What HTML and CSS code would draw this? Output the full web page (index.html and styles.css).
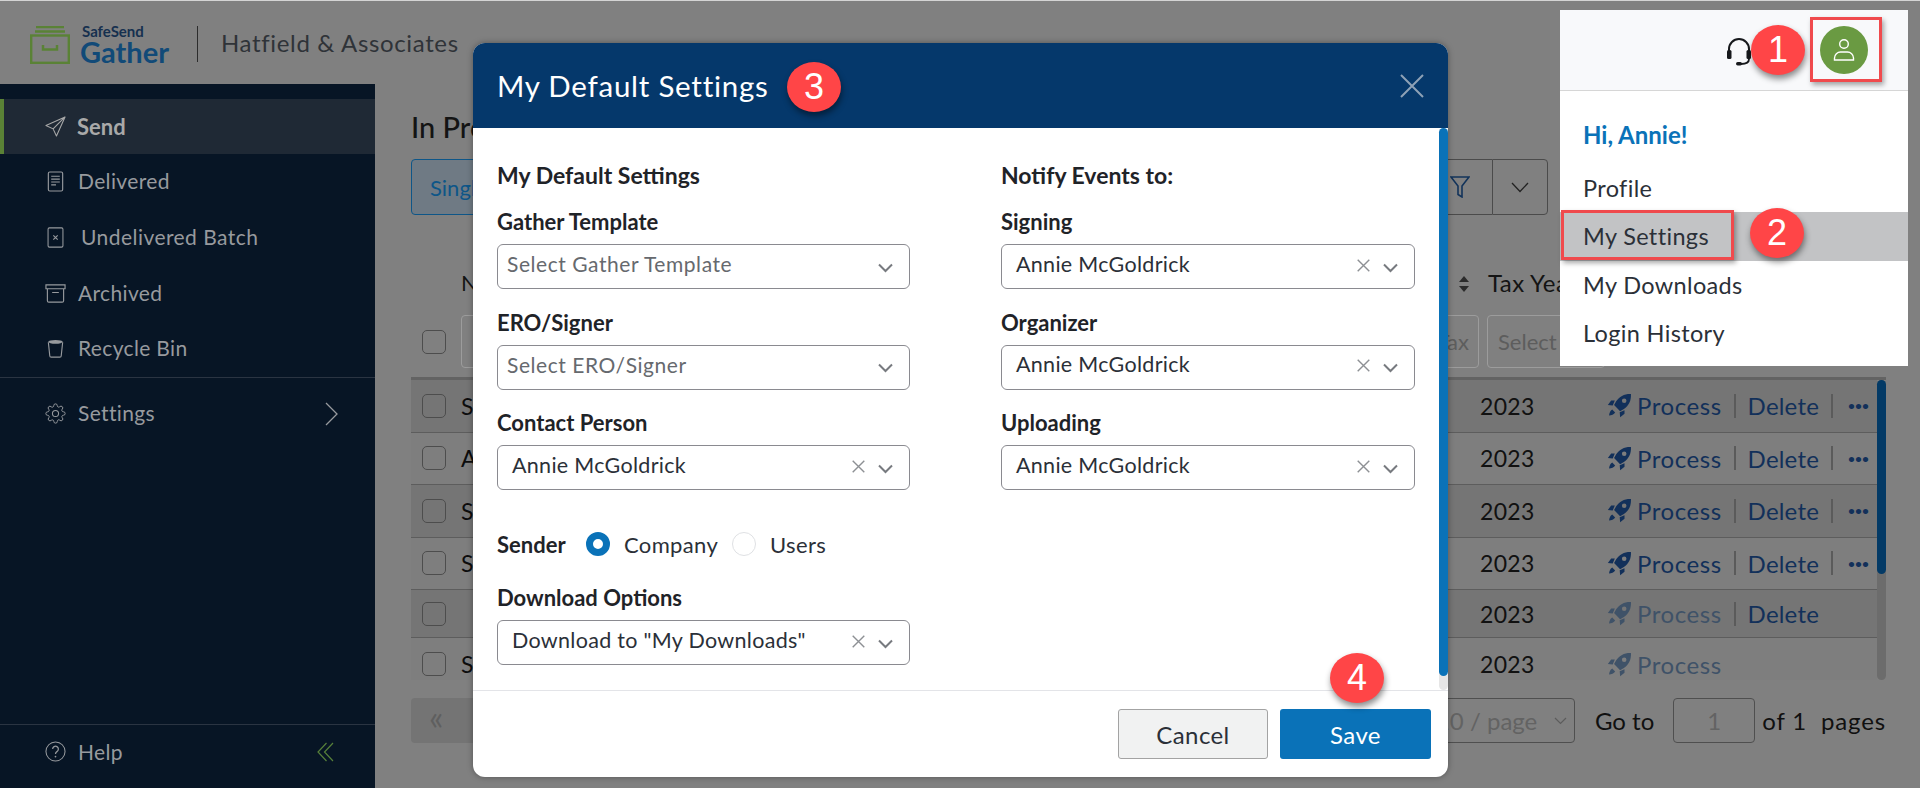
FILE: index.html
```html
<!DOCTYPE html>
<html lang="en">
<head>
<meta charset="utf-8">
<title>My Default Settings</title>
<link rel="stylesheet" href="styles.css">
</head>
<body>
<svg class="sprite" aria-hidden="true">
  <symbol id="rocket" viewBox="0 0 24 24">
    <path fill-rule="evenodd" d="M23 1c-6.500-.2-11 2.300-14.200 7L6.800 11.600l5.800 5.800 3.600-2c4.700-3.200 7.100-7.800 6.800-14.400zM16.500 5.300a2.200 2.200 0 1 1 0 4.400 2.200 2.200 0 0 1 0-4.400z"/>
    <path d="M7.500 7.300H4L.8 11.500l4.700.4zM16.800 16.500V20l-4.200 3.200-.4-4.700zM5 15.800c-1.800 1-2.800 3.700-3 5.800 2.100-.2 4.800-1.200 5.800-3z"/>
  </symbol>
  <symbol id="chev" viewBox="0 0 15 10">
    <path d="M1 1.500l6.500 6.500L14 1.500" fill="none" stroke="currentColor" stroke-width="2"/>
  </symbol>
  <symbol id="cross" viewBox="0 0 13 13">
    <path d="M.7.7l11.600 11.600M12.300.7L.7 12.300" fill="none" stroke="currentColor" stroke-width="1.400"/>
  </symbol>
</svg>

<div class="app">
  <header class="topbar">
    <svg class="logo-mark" viewBox="0 0 40 38">
      <path d="M6 1h28M5 5.500h30" stroke="#5a8236" stroke-width="2.500" fill="none"/>
      <rect x="1.200" y="9.500" width="37.600" height="27.300" fill="none" stroke="#5a8236" stroke-width="2.400"/>
      <path d="M13 19v4.500h14V19" fill="none" stroke="#5a8236" stroke-width="2.500"/>
    </svg>
    <div class="logo-text"><span class="logo-safe">SafeSend</span><span class="logo-gather">Gather</span></div>
    <div class="topbar-rule"></div>
    <div class="firm">Hatfield &amp; Associates</div>
  </header>

  <div class="shell">
    <aside class="sidebar">
      <nav class="nav">
        <a class="nav-item active">
          <svg class="nav-icon" viewBox="0 0 22 22"><path d="M21 1L1 10l7.500 3.500L12 21zM21 1L8.500 13.500" fill="none" stroke="currentColor" stroke-width="1.100" stroke-linejoin="round"/></svg>
          <span class="nav-send">Send</span>
        </a>
        <a class="nav-item">
          <svg class="nav-icon" viewBox="0 0 22 22"><rect x="3.500" y="1" width="15" height="20" rx="1.500" fill="none" stroke="currentColor" stroke-width="1.200"/><path d="M6.500 5.500h9M6.500 8.500h9M6.500 11.500h9M6.500 14.500h5" stroke="currentColor" stroke-width="1.200"/></svg>
          <span class="nav-label">Delivered</span>
        </a>
        <a class="nav-item">
          <svg class="nav-icon" viewBox="0 0 22 24"><rect x="2.500" y="1" width="17" height="22" rx="1.500" fill="none" stroke="currentColor" stroke-width="1.200"/><path d="M8.500 9.500l5 5M13.500 9.500l-5 5" stroke="currentColor" stroke-width="1.300"/></svg>
          <span class="nav-label nav-undelivered">Undelivered Batch</span>
        </a>
        <a class="nav-item">
          <svg class="nav-icon" viewBox="0 0 22 20"><path d="M1 1h20v4H1zM2.500 5v12.500a1.500 1.500 0 0 0 1.500 1.500h14a1.500 1.500 0 0 0 1.500-1.500V5M7.500 9h7" fill="none" stroke="currentColor" stroke-width="1.200"/></svg>
          <span class="nav-label">Archived</span>
        </a>
        <a class="nav-item">
          <svg class="nav-icon" viewBox="0 0 22 20"><path d="M3.500 3.500l1.500 14a1.500 1.500 0 0 0 1.500 1.500h9a1.500 1.500 0 0 0 1.500-1.500l1.500-14" fill="none" stroke="currentColor" stroke-width="1.200"/><ellipse cx="11" cy="3" rx="7.500" ry="2" fill="currentColor"/></svg>
          <span class="nav-label">Recycle Bin</span>
        </a>
      </nav>
      <a class="nav-item settings">
        <svg class="nav-icon" viewBox="0 0 24 24"><circle cx="12" cy="12" r="3.500" fill="none" stroke="currentColor" stroke-width="1.200"/><path fill="none" stroke="currentColor" stroke-width="1.100" d="M19.400 15a1.650 1.650 0 0 0 .33 1.820l.06.06a2 2 0 0 1 0 2.830 2 2 0 0 1-2.830 0l-.06-.06a1.650 1.650 0 0 0-1.820-.33 1.650 1.650 0 0 0-1 1.510V21a2 2 0 0 1-2 2 2 2 0 0 1-2-2v-.09A1.650 1.650 0 0 0 9 19.400a1.650 1.650 0 0 0-1.820.33l-.06.06a2 2 0 0 1-2.830 0 2 2 0 0 1 0-2.830l.06-.06a1.650 1.650 0 0 0 .33-1.820 1.650 1.650 0 0 0-1.510-1H3a2 2 0 0 1-2-2 2 2 0 0 1 2-2h.09A1.650 1.650 0 0 0 4.600 9a1.650 1.650 0 0 0-.33-1.820l-.06-.06a2 2 0 0 1 0-2.830 2 2 0 0 1 2.830 0l.06.06a1.650 1.650 0 0 0 1.820.33H9a1.650 1.650 0 0 0 1-1.510V3a2 2 0 0 1 2-2 2 2 0 0 1 2 2v.09a1.650 1.650 0 0 0 1 1.510 1.650 1.650 0 0 0 1.820-.33l.06-.06a2 2 0 0 1 2.830 0 2 2 0 0 1 0 2.830l-.06.06a1.650 1.650 0 0 0-.33 1.820V9a1.650 1.650 0 0 0 1.510 1H21a2 2 0 0 1 2 2 2 2 0 0 1-2 2h-.09a1.650 1.650 0 0 0-1.510 1z"/></svg>
        <span class="nav-label">Settings</span>
        <svg class="nav-arrow" viewBox="0 0 13 24"><path d="M1 1l11 11L1 23" fill="none" stroke="currentColor" stroke-width="1.300"/></svg>
      </a>
      <div class="side-foot">
        <svg class="nav-icon" viewBox="0 0 22 22"><circle cx="11" cy="11" r="10" fill="none" stroke="currentColor" stroke-width="1.100"/><path d="M8 8.500a3 3 0 1 1 4.500 2.600c-1 .6-1.500 1.200-1.500 2.400" fill="none" stroke="currentColor" stroke-width="1.300"/><circle cx="11" cy="16.300" r=".9" fill="currentColor"/></svg>
        <span class="nav-label">Help</span>
        <svg class="foot-arrow" viewBox="0 0 17 20"><path d="M9.500 1L1 10l8.500 9M16 1l-8.500 9 8.500 9" fill="none" stroke="#57803a" stroke-width="1.200"/></svg>
      </div>
    </aside>

    <main class="main">
      <h1 class="page-title">In Progress</h1>
      <div class="toolbar">
        <button class="tab-btn">Single Organizer</button>
        <div class="tools">
          <div class="tool"><svg class="tool-filter" viewBox="0 0 20 22"><path d="M1 1h18l-7 9v11l-4-2.500V10z" fill="none" stroke="#12335a" stroke-width="1.600"/></svg></div>
          <div class="tool tool-wide"><svg class="tool-chev" viewBox="0 0 18 11"><path d="M1 1l8 8.500L17 1" fill="none" stroke="#222" stroke-width="1.300"/></svg></div>
        </div>
      </div>
      <div class="head-row">
        <span class="head-name">Name</span>
        <span class="sort"></span>
        <span class="head-year">Tax Year</span>
      </div>
      <div class="filter-row">
        <span class="check"></span>
        <span class="filter-input">Tax</span>
        <span class="filter-select">Select</span>
      </div>
      <div class="grid">
        <div class="rows">
          <div class="row">
            <span class="check"></span><span class="cell-name">Smith</span><span class="cell-year">2023</span>
            <span class="actions"><svg class="rocket"><use href="#rocket"/></svg><span>Process</span><i class="sep"></i><span class="del">Delete</span><i class="sep"></i><b class="dots">•••</b></span>
          </div>
          <div class="row even">
            <span class="check"></span><span class="cell-name">Adams</span><span class="cell-year">2023</span>
            <span class="actions"><svg class="rocket"><use href="#rocket"/></svg><span>Process</span><i class="sep"></i><span class="del">Delete</span><i class="sep"></i><b class="dots">•••</b></span>
          </div>
          <div class="row">
            <span class="check"></span><span class="cell-name">Smith</span><span class="cell-year">2023</span>
            <span class="actions"><svg class="rocket"><use href="#rocket"/></svg><span>Process</span><i class="sep"></i><span class="del">Delete</span><i class="sep"></i><b class="dots">•••</b></span>
          </div>
          <div class="row even">
            <span class="check"></span><span class="cell-name">Smith</span><span class="cell-year">2023</span>
            <span class="actions"><svg class="rocket"><use href="#rocket"/></svg><span>Process</span><i class="sep"></i><span class="del">Delete</span><i class="sep"></i><b class="dots">•••</b></span>
          </div>
          <div class="row short">
            <span class="check"></span><span class="cell-name"></span><span class="cell-year">2023</span>
            <span class="actions"><svg class="rocket off"><use href="#rocket"/></svg><span class="off">Process</span><i class="sep"></i><span class="del">Delete</span></span>
          </div>
          <div class="row even last">
            <span class="check"></span><span class="cell-name">Smith</span><span class="cell-year">2023</span>
            <span class="actions"><svg class="rocket off"><use href="#rocket"/></svg><span class="off">Process</span></span>
          </div>
        </div>
        <div class="table-scroll"><div class="table-thumb"></div></div>
      </div>
      <div class="pager">
        <div class="page-first">«</div>
        <div class="page-size">10 / page<svg class="size-chev" viewBox="0 0 13 8"><path d="M1 1l5.500 5.500L12 1" fill="none" stroke="#5c5c5c" stroke-width="1.200"/></svg></div>
        <span class="page-go">Go to</span>
        <div class="page-input">1</div>
        <span class="page-of">of 1  pages</span>
      </div>
    </main>
  </div>
</div>

<section class="modal">
  <div class="modal-head">
    <h2 class="modal-title">My Default Settings</h2>
    <svg class="modal-close" viewBox="0 0 24 24"><path d="M1 1l22 22M23 1L1 23" stroke="#8ea1b6" stroke-width="2" fill="none"/></svg>
  </div>
  <div class="modal-body">
    <div class="col">
      <h3 class="col-title">My Default Settings</h3>
      <div class="field">
        <label class="field-label">Gather Template</label>
        <div class="select"><span class="placeholder">Select Gather Template</span><svg class="chev"><use href="#chev"/></svg></div>
      </div>
      <div class="field">
        <label class="field-label">ERO/Signer</label>
        <div class="select"><span class="placeholder">Select ERO/Signer</span><svg class="chev"><use href="#chev"/></svg></div>
      </div>
      <div class="field">
        <label class="field-label">Contact Person</label>
        <div class="select"><span class="value">Annie McGoldrick</span><svg class="cross"><use href="#cross"/></svg><svg class="chev"><use href="#chev"/></svg></div>
      </div>
      <div class="sender">
        <span class="sender-label">Sender</span>
        <span class="radio on"></span><span class="radio-text">Company</span>
        <span class="radio"></span><span class="radio-text">Users</span>
      </div>
      <div class="field">
        <label class="field-label">Download Options</label>
        <div class="select"><span class="value">Download to "My Downloads"</span><svg class="cross"><use href="#cross"/></svg><svg class="chev"><use href="#chev"/></svg></div>
      </div>
    </div>
    <div class="col col-right">
      <h3 class="col-title">Notify Events to:</h3>
      <div class="field">
        <label class="field-label">Signing</label>
        <div class="select"><span class="value">Annie McGoldrick</span><svg class="cross"><use href="#cross"/></svg><svg class="chev"><use href="#chev"/></svg></div>
      </div>
      <div class="field">
        <label class="field-label">Organizer</label>
        <div class="select"><span class="value">Annie McGoldrick</span><svg class="cross"><use href="#cross"/></svg><svg class="chev"><use href="#chev"/></svg></div>
      </div>
      <div class="field">
        <label class="field-label">Uploading</label>
        <div class="select"><span class="value">Annie McGoldrick</span><svg class="cross"><use href="#cross"/></svg><svg class="chev"><use href="#chev"/></svg></div>
      </div>
    </div>
    <div class="modal-scroll"><div class="modal-thumb"></div></div>
  </div>
  <div class="modal-foot">
    <button class="btn btn-cancel">Cancel</button>
    <button class="btn btn-save">Save</button>
  </div>
</section>

<section class="user-panel">
  <div class="panel-top">
    <svg class="headset" viewBox="0 0 26 30"><path d="M3 16v-4a10 10 0 0 1 20 0v4" fill="none" stroke="#17191c" stroke-width="2"/><rect x="1" y="13" width="4.500" height="9" rx="1.500" fill="#17191c"/><rect x="20.500" y="13" width="4.500" height="9" rx="1.500" fill="#17191c"/><path d="M23 22c0 3-3 5-8 5" fill="none" stroke="#17191c" stroke-width="1.800"/><rect x="10" y="25" width="6" height="3.500" rx="1.700" fill="#17191c"/></svg>
    <div class="avatar"><svg viewBox="0 0 22 24"><circle cx="11" cy="6" r="4.300" fill="none" stroke="#fff" stroke-width="1.400"/><path d="M1.500 22v-2c0-3.500 3-6 6-6h7c3 0 6 2.500 6 6v2z" fill="none" stroke="#fff" stroke-width="1.400"/></svg></div>
  </div>
  <div class="panel-greet">Hi, Annie!</div>
  <ul class="panel-menu">
    <li>Profile</li>
    <li class="hover">My Settings</li>
    <li>My Downloads</li>
    <li>Login History</li>
  </ul>
</section>

<div class="callout-box box-user"></div>
<div class="callout-box box-settings"></div>
<div class="badge b1">1</div>
<div class="badge b2">2</div>
<div class="badge b3">3</div>
<div class="badge b4">4</div>
</body>
</html>
```
FILE: styles.css
```css
* { box-sizing: border-box; }
html, body { margin: 0; padding: 0; }
body {
  width: 1920px;
  height: 788px;
  overflow: hidden;
  position: relative;
  font-family: Lato, "Noto Sans", sans-serif;
  font-size: 22px;
  color: #111;
  background: #808080;
}
.sprite { display: none; }
.app { height: 788px; display: flex; flex-direction: column; border-top: 1px solid #d4d4d4; }

/* top bar */
.topbar { height: 83px; flex: none; display: flex; align-items: center; padding-left: 30px; background: #808080; }
.logo-mark { width: 40px; height: 38px; margin-top: 4px; }
.logo-text { display: flex; flex-direction: column; margin-left: 11px; margin-top: 3px; line-height: 1; }
.logo-safe { font-size: 15px; font-weight: 700; color: #16304f; line-height: 15px; margin-left: 1px; }
.logo-gather { font-size: 29px; font-weight: 700; color: #114a78; line-height: 25px; margin-left: -1px; }
.topbar-rule { width: 1px; height: 36px; background: #2c2c2c; margin: 2px 23px 0 28px; }
.firm { font-size: 24px; color: #2f3338; letter-spacing: .65px; }

/* sidebar */
.shell { flex: 1; display: flex; min-height: 0; }
.sidebar { width: 375px; flex: none; background: #071525; padding-top: 15px; display: flex; flex-direction: column; color: #979a9e; }
.nav { border-bottom: 1px solid #2a3442; }
.nav-item { display: flex; align-items: center; height: 55.7px; padding-left: 45px; }
.nav-item.active { background: #1f2935; border-left: 4px solid #5a8236; padding-left: 41px; height: 55px; color: #a9a9a9; }
.nav-icon { width: 21px; height: 21px; flex: none; }
.nav-label { margin: 0 0 2px 12px; font-size: 21px; letter-spacing: .35px; }
.nav-send { margin-left: 11px; font-size: 22px; font-weight: 700; }
.nav-undelivered { margin-left: 15px; letter-spacing: .45px; }
.settings { height: 72px; position: relative; }
.nav-arrow { width: 13px; height: 24px; margin-left: auto; margin-right: 37px; }
.side-foot { margin-top: auto; height: 64px; border-top: 1px solid #2a3442; display: flex; align-items: center; padding: 0 0 10px 45px; }
.side-foot .nav-label { margin-bottom: 0; }
.foot-arrow { width: 17px; height: 20px; margin-left: auto; margin-right: 41px; }

/* main */
.main { flex: 1; min-width: 0; padding: 0 34px 0 36px; display: flex; flex-direction: column; overflow: hidden; }
.page-title { margin: 25px 0 0; height: 36px; font-size: 29px; line-height: 36px; font-weight: 500; color: #141414; }
.toolbar { height: 56px; margin-top: 14px; display: flex; justify-content: space-between; }
.tab-btn { width: 230px; height: 56px; font: 22px Lato, sans-serif; color: #0e5688; background: #6f7a84; border: 1px solid #0e5688; border-radius: 4px; padding: 0 18px; text-align: left; }
.tools { display: flex; }
.tool { width: 56px; height: 56px; border: 1px solid #4b4b4b; border-radius: 0 4px 4px 0; display: flex; align-items: center; justify-content: center; }
.tool:first-child { width: 100px; border-radius: 4px 0 0 4px; border-right: 0; justify-content: flex-end; padding-right: 22px; }
.tool-wide { margin-right: 338px; }
.tool-filter { width: 20px; height: 22px; }
.tool-chev { width: 18px; height: 11px; }
.head-row { height: 28px; margin-top: 54px; display: flex; align-items: flex-start; }
.head-name { margin-left: 50px; font-size: 22px; line-height: 28px; color: #141414; }
.sort { margin-left: auto; margin-right: 20px; width: 10px; height: 16px; margin-top: 7px; position: relative; }
.sort::before, .sort::after { content: ""; position: absolute; left: 0; border-left: 5px solid transparent; border-right: 5px solid transparent; }
.sort::before { top: 0; border-bottom: 6px solid #2b2b2b; }
.sort::after { bottom: 0; border-top: 6px solid #2b2b2b; }
.head-year { width: 398px; font-size: 24px; line-height: 28px; letter-spacing: .4px; color: #141414; margin-left: -1px; }
.filter-row { height: 53px; margin-top: 18px; display: flex; align-items: center; }
.filter-row .check { margin: 0 15px 0 11px; }
.filter-input { width: 1018px; height: 53px; border: 1px solid #9c9c9c; border-radius: 4px; text-align: right; padding-right: 9px; line-height: 51px; color: #5d5d5d; }
.filter-select { width: 118px; height: 53px; margin-left: 8px; border: 1px solid #9c9c9c; border-radius: 4px; padding-left: 10px; line-height: 51px; color: #5d5d5d; }
.check { width: 24px; height: 24px; flex: none; border: 1px solid #4d4d4d; border-radius: 5px; display: block; }

/* table */
.grid { display: flex; margin-top: 9px; border-top: 3px solid #636363; height: 303px; }
.rows { flex: 1; min-width: 0; overflow: hidden; }
.row { height: 52.500px; display: grid; grid-template-columns: 50px 1019px 127px 1fr; align-items: center; background: #757575; border-bottom: 1px solid #5d5d5d; font-size: 23px; }
.row.even { background: #7e7e7e; }
.row.short { height: 48px; }
.row.last { border-bottom: 0; height: 52px; }
.row .check { margin-left: 11px; }
.cell-name { color: #0d0d0d; }
.cell-year { color: #111; letter-spacing: .3px; }
.actions { display: flex; align-items: center; color: #12305a; font-size: 24px; letter-spacing: .55px; white-space: nowrap; }
.del { letter-spacing: .2px; margin-left: -1px; }
.rocket { width: 25px; height: 25px; fill: #12305a; flex: none; margin-right: 5px; }
.rocket.off { fill: #3f5268; }
.off { color: #3f5268; }
.sep { width: 2px; height: 24px; background: #5b5b5b; margin: 0 13px 0 12px; }
.dots { font-size: 12px; letter-spacing: 0; color: #12305a; margin-left: 2px; }
.table-scroll { width: 9px; flex: none; background: #6c6c6c; border-radius: 5px; }
.table-thumb { height: 194px; background: #033a66; border-radius: 5px; }

/* pager */
.pager { margin-top: 18px; height: 45px; display: flex; align-items: center; font-size: 24px; }
.page-first { width: 80px; height: 45px; background: #747474; border-radius: 4px; font-size: 34px; line-height: 38px; padding-left: 18px; color: #5f5f5f; }
.page-size { margin-left: auto; width: 170px; height: 45px; padding-left: 30px; border: 1px solid #4f4f4f; border-radius: 4px; display: flex; align-items: center; justify-content: space-between; padding-right: 7px; color: #636363; }
.size-chev { width: 13px; height: 8px; }
.page-go { margin-left: 20px; color: #101010; }
.page-input { width: 82px; height: 45px; margin-left: 19px; border: 1px solid #4f4f4f; border-radius: 4px; text-align: center; line-height: 43px; color: #636363; }
.page-of { margin-left: 7px; white-space: pre; color: #101010; letter-spacing: .85px; }

/* modal */
.modal { position: absolute; left: 473px; top: 43px; width: 975px; height: 734px; background: #fff; border-radius: 12px; display: flex; flex-direction: column; overflow: hidden; box-shadow: 0 0 6px rgba(0,0,0,.35); }
.modal-head { height: 85px; flex: none; background: #05386b; display: flex; align-items: center; justify-content: space-between; padding: 0 24px; }
.modal-title { margin: 0; font-size: 29.500px; font-weight: 400; line-height: 36px; color: #fff; letter-spacing: .75px; }
.modal-close { width: 24px; height: 24px; }
.modal-body { flex: 1; position: relative; display: flex; gap: 91px; padding: 32px 0 0 24px; min-height: 0; }
.col { width: 413px; flex: none; display: flex; flex-direction: column; }
.col-right { width: 414px; }
.col-title { margin: 0 0 18px; height: 30px; font-size: 23px; line-height: 30px; font-weight: 700; color: #1f2328; }
.field { margin-bottom: 19.500px; }
.field-label { display: block; height: 28px; margin-bottom: 8px; font-size: 22px; line-height: 28px; font-weight: 700; color: #1f2328; }
.select { height: 45px; border: 1px solid #8a8a90; border-radius: 6px; display: flex; align-items: center; padding: 0 16px 6px 9px; color: #2b3038; }
.placeholder { flex: 1; color: #66696e; letter-spacing: .55px; font-size: 21px; }
.value { flex: 1; padding-left: 5px; letter-spacing: .3px; font-size: 21.500px; white-space: nowrap; }
.chev { width: 15px; height: 10px; color: #777a7f; flex: none; margin-top: 8px; }
.cross { width: 13px; height: 13px; color: #8d9094; margin-right: 13px; margin-top: 3px; flex: none; }
.sender { height: 36px; margin-top: 16.500px; margin-bottom: 22px; display: flex; align-items: center; }
.sender-label { width: 89px; font-size: 22px; font-weight: 700; color: #1f2328; }
.radio { width: 24px; height: 24px; border: 1px solid #dfe1e4; border-radius: 50%; flex: none; }
.radio.on { border: 7px solid #0a72b8; }
.radio-text { margin-left: 14px; margin-right: 14px; font-size: 22px; letter-spacing: .35px; color: #2b3038; }
.modal-scroll { position: absolute; right: 0; top: 0; bottom: 0; width: 9px; background: #e6e6e6; border-radius: 5px; }
.modal-thumb { height: 548px; background: #0a72b8; border-radius: 5px; }
.modal-foot { height: 87px; flex: none; border-top: 1px solid #e3e4e8; display: flex; justify-content: flex-end; gap: 12px; padding: 18px 17px 0 0; }
.btn { width: 151px; height: 50px; font: 24px Lato, sans-serif; letter-spacing: .4px; border-radius: 3px; }
.btn-cancel { width: 150px; background: #f1f2f2; border: 1px solid #a3a3a3; color: #2b3038; }
.btn-save { background: #0a72b8; border: 0; color: #fff; }

/* user panel */
.user-panel { position: absolute; left: 1560px; top: 10px; width: 348px; height: 356px; background: #fff; }
.panel-top { height: 81px; background: #f8f9fb; border-bottom: 1px solid #d6d6d6; display: flex; align-items: center; padding-left: 166px; }
.headset { width: 26px; height: 30px; margin-top: 4px; }
.avatar { width: 48px; height: 48px; margin-left: 68px; border-radius: 50%; background: #6a9a42; display: flex; align-items: center; justify-content: center; }
.avatar svg { width: 22px; height: 24px; }
.panel-greet { height: 73px; padding: 29px 0 0 23px; font-size: 24px; line-height: 30px; font-weight: 700; color: #0a72b8; }
.panel-menu { list-style: none; margin: 0; padding: 0; }
.panel-menu li { height: 48.300px; padding-left: 23px; line-height: 49.500px; color: #2b3038; font-size: 23.500px; letter-spacing: .35px; }
.panel-menu .hover { background: #c2c3c5; }

/* callouts */
.callout-box { position: absolute; border: 3px solid #f04a4d; box-shadow: 2px 3px 5px rgba(0,0,0,.35); }
.box-user { left: 1810px; top: 17px; width: 72px; height: 65px; }
.box-settings { left: 1561px; top: 210px; width: 173px; height: 50px; }
.badge { position: absolute; width: 54px; height: 50px; border-radius: 50%; background: #ff4547; color: #fff; font-family: "Liberation Sans", Arial, sans-serif; font-size: 36px; line-height: 50px; text-align: center; box-shadow: 1px 4px 6px rgba(0,0,0,.45); }
.b1 { left: 1751px; top: 25px; }
.b2 { left: 1750px; top: 208px; }
.b3 { left: 787px; top: 62px; }
.b4 { left: 1330px; top: 653px; }
```
